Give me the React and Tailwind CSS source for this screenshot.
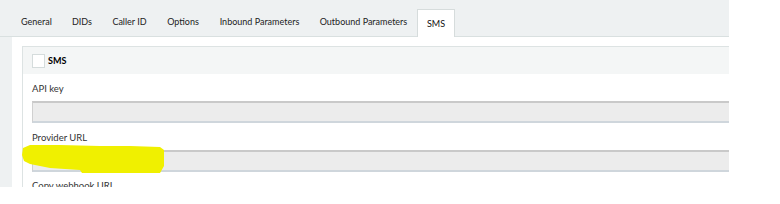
import React from 'react';

const tabs = [
    { label: 'General', w: 'w-[51px]' },
    { label: 'DIDs', w: 'w-[40px]' },
    { label: 'Caller ID', w: 'w-[55px]' },
    { label: 'Options', w: 'w-[52px]' },
    { label: 'Inbound Parameters', w: 'w-[101px]' },
    { label: 'Outbound Parameters', w: 'w-[107px]' },
    { label: 'SMS', w: 'w-[38px]', active: true },
];

function Field({ label }) {
    return (
        <div className="flex flex-col">
            <label className="text-[9.5px] leading-[12px] text-[#333] h-[27px] pt-[9px]">{label}</label>
            <div className="h-[22px] bg-[#ececec] border-t-2 border-b-2 border-t-[#c9c9c9] border-b-[#cfd6dc] border-l border-l-[#d0d0d0]" />
        </div>
    );
}

export default function App() {
    return (
        <div className="w-[780px] h-[204px] bg-white overflow-hidden" style={{ fontFamily: 'Lato, "Noto Sans", sans-serif' }}>
            <div className="relative w-[729px] h-[187px] bg-[#eef1f2] overflow-hidden">
                {/* tabs */}
                <div className="flex items-end h-[37px] pl-[11px] border-b border-[#d9e0e0]">
                    {tabs.map((t) => (
                        <div
                            key={t.label}
                            className={
                                t.active
                                    ? `${t.w} h-[28px] flex items-center justify-center whitespace-nowrap text-[9px] text-[#111] bg-white border border-b-0 border-[#d6dcdc] -mb-px`
                                    : `${t.w} h-[28px] flex items-center justify-center whitespace-nowrap text-[9px] text-[#222]`
                            }
                        >
                            {t.label}
                        </div>
                    ))}
                </div>
                {/* content panel */}
                <div className="ml-[12px] bg-white h-[160px] pt-[9px] pl-[10px]">
                    <div className="border-l border-t border-[#dde3e3] h-full">
                        <div className="h-[27px] bg-[#f4f6f6] flex items-center pl-[9px] gap-[3px]">
                            <div className="w-[13px] h-[14px] bg-white border border-[#d5dcdc]" />
                            <span className="text-[9px] font-bold text-black">SMS</span>
                        </div>
                        <div className="pl-[9px] flex flex-col">
                            <Field label="API key" />
                            <Field label="Provider URL" />
                            <label className="text-[9.5px] leading-[12px] text-[#333] pt-[8px]">Copy webhook URL</label>
                        </div>
                    </div>
                </div>
                {/* highlighter scribble */}
                <svg className="absolute left-0 top-0 pointer-events-none" width="729" height="187">
                    <polygon
                        points="23,148 30,145 60,145 100,146 130,146 160,147 164,150 164,166 160,173 82,173 80,170 50,168 30,164 24,161 22,155"
                        fill="#f0f000"
                    />
                </svg>
            </div>
        </div>
    );
}
